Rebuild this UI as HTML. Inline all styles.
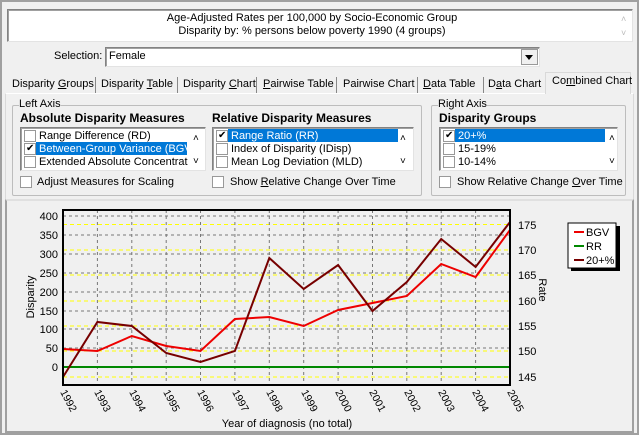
<!DOCTYPE html>
<html><head><meta charset="utf-8"><style>
*{box-sizing:border-box}
body{margin:0;width:639px;height:435px;background:#f0f0f0;font-family:"Liberation Sans",sans-serif;font-size:11px;color:#000;position:relative;overflow:hidden}
.a{position:absolute;white-space:nowrap}
.sunk{position:absolute;background:#fff;border:1px solid #828282;border-right-color:#e3e3e3;border-bottom-color:#e3e3e3;box-shadow:inset 1px 1px 0 #a0a0a0}
.grp{position:absolute;border:1px solid #bdbdbd;border-radius:2px}
.cb{position:absolute;width:12px;height:12px;border:1px solid #999;background:#fff}
.ck{position:absolute;font-size:10px;line-height:12px}
.sel{position:absolute;background:#0078d7;color:#fff}
.b{font-weight:bold;font-size:12px}
u{text-decoration:underline}
</style></head><body>
<div class="a" style="left:0;top:0;width:639px;height:435px;border:2px solid #a0a0a0"></div>
<div class="sunk" style="left:7px;top:9px;width:626px;height:33px"></div>
<div class="a" style="left:7px;top:12px;width:610px;text-align:center;line-height:13px">Age-Adjusted Rates per 100,000 by Socio-Economic Group<br>Disparity by: % persons below poverty 1990 (4 groups)</div>
<div class="a" style="left:621px;top:14px;color:#bbb;font-size:9px">&#708;</div>
<div class="a" style="left:621px;top:28px;color:#bbb;font-size:9px">&#709;</div>
<div class="a" style="left:54px;top:50px">Selection:</div>
<div class="sunk" style="left:105px;top:47px;width:435px;height:20px"></div>
<div class="a" style="left:109px;top:50px">Female</div>
<div class="a" style="left:521px;top:49px;width:17px;height:16px;background:#f0f0f0;border:1px solid #999"></div>
<div class="a" style="left:525px;top:55px;width:0;height:0;border-left:4px solid transparent;border-right:4px solid transparent;border-top:5px solid #000"></div>
<div class="a" style="left:5px;top:93px;width:629px;height:339px;border:1px solid #d9d9d9;border-top-color:#fff;background:#f0f0f0"></div>
<div class="a" style="left:12px;top:78px">Disparity <u>G</u>roups</div>
<div class="a" style="left:95px;top:77px;border-left:1px solid #888;height:16px"></div>
<div class="a" style="left:101px;top:78px">Disparity <u>T</u>able</div>
<div class="a" style="left:177px;top:77px;border-left:1px solid #888;height:16px"></div>
<div class="a" style="left:183px;top:78px">Disparity <u>C</u>hart</div>
<div class="a" style="left:256px;top:77px;border-left:1px solid #888;height:16px"></div>
<div class="a" style="left:263px;top:78px"><u>P</u>airwise Table</div>
<div class="a" style="left:336px;top:77px;border-left:1px solid #888;height:16px"></div>
<div class="a" style="left:343px;top:78px">Pairwise Chart</div>
<div class="a" style="left:417px;top:77px;border-left:1px solid #888;height:16px"></div>
<div class="a" style="left:423px;top:78px"><u>D</u>ata Table</div>
<div class="a" style="left:483px;top:77px;border-left:1px solid #888;height:16px"></div>
<div class="a" style="left:488px;top:78px">D<u>a</u>ta Chart</div>
<div class="a" style="left:545px;top:72px;width:86px;height:22px;border:1px solid #d9d9d9;border-bottom:none;background:#f0f0f0"></div>
<div class="a" style="left:552px;top:75px">Co<u>m</u>bined Chart</div>
<div class="grp" style="left:12px;top:105px;width:410px;height:91px"></div>
<div class="a" style="left:19px;top:98px;background:#f0f0f0">Left Axis</div>
<div class="a b" style="left:20px;top:111px">Absolute Disparity Measures</div>
<div class="a b" style="left:212px;top:111px">Relative Disparity Measures</div>
<div class="sunk" style="left:20px;top:127px;width:186px;height:44px"></div>
<div class="sunk" style="left:212px;top:127px;width:202px;height:44px"></div>
<div class="a" style="left:193px;top:133px;font-size:10px">&#708;</div>
<div class="a" style="left:193px;top:156px;font-size:10px">&#709;</div>
<div class="a" style="left:400px;top:133px;font-size:10px">&#708;</div>
<div class="a" style="left:400px;top:156px;font-size:10px">&#709;</div>
<div class="cb" style="left:24px;top:130px"></div>
<div class="a" style="left:39px;top:130px">Range Difference (RD)</div>
<div class="sel" style="left:36px;top:142px;width:151px;height:13px"></div>
<div class="cb" style="left:24px;top:143px"></div><div class="ck" style="left:26px;top:143px">&#10004;</div>
<div class="a" style="left:39px;top:143px;color:#fff">Between-Group Variance (BGV</div>
<div class="cb" style="left:24px;top:156px"></div>
<div class="a" style="left:39px;top:156px;width:149px;overflow:hidden">Extended Absolute Concentratio</div>
<div class="sel" style="left:228px;top:129px;width:170px;height:13px"></div>
<div class="cb" style="left:216px;top:130px"></div><div class="ck" style="left:218px;top:130px">&#10004;</div>
<div class="a" style="left:231px;top:130px;color:#fff">Range Ratio (RR)</div>
<div class="cb" style="left:216px;top:143px"></div>
<div class="a" style="left:231px;top:143px">Index of Disparity (IDisp)</div>
<div class="cb" style="left:216px;top:156px"></div>
<div class="a" style="left:231px;top:156px">Mean Log Deviation (MLD)</div>
<div class="cb" style="left:20px;top:176px"></div>
<div class="a" style="left:37px;top:176px">Adjust Measures for Scaling</div>
<div class="cb" style="left:212px;top:176px"></div>
<div class="a" style="left:230px;top:176px">Show <u>R</u>elative Change Over Time</div>
<div class="grp" style="left:431px;top:105px;width:195px;height:91px"></div>
<div class="a" style="left:438px;top:98px;background:#f0f0f0">Right Axis</div>
<div class="a b" style="left:439px;top:111px">Disparity Groups</div>
<div class="sunk" style="left:439px;top:127px;width:179px;height:44px"></div>
<div class="a" style="left:609px;top:133px;font-size:10px">&#708;</div>
<div class="a" style="left:609px;top:156px;font-size:10px">&#709;</div>
<div class="sel" style="left:455px;top:129px;width:150px;height:13px"></div>
<div class="cb" style="left:443px;top:130px"></div><div class="ck" style="left:445px;top:130px">&#10004;</div>
<div class="a" style="left:458px;top:130px;color:#fff">20+%</div>
<div class="cb" style="left:443px;top:143px"></div>
<div class="a" style="left:458px;top:143px">15-19%</div>
<div class="cb" style="left:443px;top:156px"></div>
<div class="a" style="left:458px;top:156px">10-14%</div>
<div class="cb" style="left:439px;top:176px"></div>
<div class="a" style="left:457px;top:176px">Show Relative Change <u>O</u>ver Time</div>
<div class="a" style="left:5px;top:199px;width:629px;height:234px;border:2px solid #a0a0a0;border-top-color:#e0e0e0"></div>
<svg class="a" style="left:0;top:0" width="639" height="435" font-family="Liberation Sans,sans-serif" font-size="11">
<g stroke="#ff0" stroke-width="1" stroke-dasharray="4,3">
<line x1="63" x2="510" y1="224.5" y2="224.5"/><line x1="63" x2="510" y1="250" y2="250"/><line x1="63" x2="510" y1="275" y2="275"/><line x1="63" x2="510" y1="301" y2="301"/><line x1="63" x2="510" y1="326" y2="326"/><line x1="63" x2="510" y1="351" y2="351"/><line x1="63" x2="510" y1="377" y2="377"/>
</g>
<g stroke="#777" stroke-width="1" stroke-dasharray="3,3">
<line x1="63" x2="510" y1="216" y2="216"/><line x1="63" x2="510" y1="235" y2="235"/><line x1="63" x2="510" y1="254" y2="254"/><line x1="63" x2="510" y1="273" y2="273"/><line x1="63" x2="510" y1="292" y2="292"/><line x1="63" x2="510" y1="311" y2="311"/><line x1="63" x2="510" y1="329" y2="329"/><line x1="63" x2="510" y1="348" y2="348"/>
<line x1="97.4" x2="97.4" y1="210" y2="385"/><line x1="131.8" x2="131.8" y1="210" y2="385"/><line x1="166.2" x2="166.2" y1="210" y2="385"/><line x1="200.5" x2="200.5" y1="210" y2="385"/><line x1="234.9" x2="234.9" y1="210" y2="385"/><line x1="269.3" x2="269.3" y1="210" y2="385"/><line x1="303.7" x2="303.7" y1="210" y2="385"/><line x1="338.1" x2="338.1" y1="210" y2="385"/><line x1="372.5" x2="372.5" y1="210" y2="385"/><line x1="406.8" x2="406.8" y1="210" y2="385"/><line x1="441.2" x2="441.2" y1="210" y2="385"/><line x1="475.6" x2="475.6" y1="210" y2="385"/>
</g>
<line x1="63" x2="510" y1="367" y2="367" stroke="#080" stroke-width="2"/>
<polyline fill="none" stroke="#e00" stroke-width="2" points="63,349 97.4,351 131.8,336 166.2,346 200.5,351 234.9,319 269.3,317 303.7,326 338.1,310 372.5,303 406.8,296 441.2,264 475.6,277 510,230"/>
<polyline fill="none" stroke="#700" stroke-width="2" points="63,377 97.4,322 131.8,326 166.2,353 200.5,362 234.9,351 269.3,258 303.7,289 338.1,265 372.5,311 406.8,282 441.2,239 475.6,267 510,222"/>
<rect x="63" y="210" width="447" height="175" fill="none" stroke="#000" stroke-width="2"/>
<g text-anchor="end">
<text x="58" y="220">400</text><text x="58" y="239">350</text><text x="58" y="258">300</text><text x="58" y="277">250</text><text x="58" y="296">200</text><text x="58" y="315">150</text><text x="58" y="333">100</text><text x="58" y="352">50</text><text x="58" y="371">0</text>
</g>
<g><text x="518" y="229">175</text><text x="518" y="254">170</text><text x="518" y="279">165</text><text x="518" y="305">160</text><text x="518" y="330">155</text><text x="518" y="355">150</text><text x="518" y="381">145</text></g>
<text transform="translate(34,297) rotate(-90)" text-anchor="middle">Disparity</text>
<text transform="translate(539,290) rotate(90)" text-anchor="middle">Rate</text>
<g font-size="10.5">
<text transform="translate(60,392) rotate(62)">1992</text><text transform="translate(94,392) rotate(62)">1993</text><text transform="translate(129,392) rotate(62)">1994</text><text transform="translate(163,392) rotate(62)">1995</text><text transform="translate(197,392) rotate(62)">1996</text><text transform="translate(232,392) rotate(62)">1997</text><text transform="translate(266,392) rotate(62)">1998</text><text transform="translate(301,392) rotate(62)">1999</text><text transform="translate(335,392) rotate(62)">2000</text><text transform="translate(369,392) rotate(62)">2001</text><text transform="translate(404,392) rotate(62)">2002</text><text transform="translate(438,392) rotate(62)">2003</text><text transform="translate(472,392) rotate(62)">2004</text><text transform="translate(507,392) rotate(62)">2005</text>
</g>
<text x="287" y="427" text-anchor="middle">Year of diagnosis (no total)</text>
<rect x="571" y="226" width="49" height="45" fill="#000"/>
<rect x="568" y="223" width="48" height="45" fill="#fff" stroke="#000"/>
<line x1="574" x2="584" y1="232" y2="232" stroke="#e00" stroke-width="2"/><text x="586" y="236">BGV</text>
<line x1="574" x2="584" y1="246" y2="246" stroke="#080" stroke-width="2"/><text x="586" y="250">RR</text>
<line x1="574" x2="584" y1="260" y2="260" stroke="#700" stroke-width="2"/><text x="586" y="264">20+%</text>
</svg>
</body></html>
